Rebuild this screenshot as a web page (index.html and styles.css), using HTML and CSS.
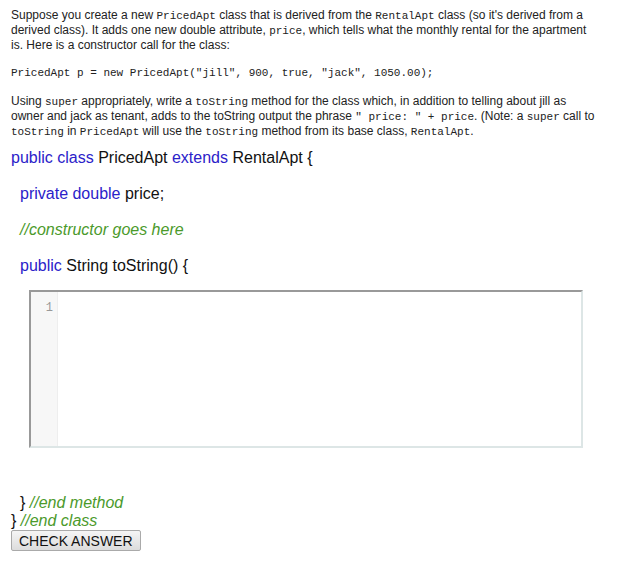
FILE: index.html
```html
<!doctype html>
<html lang="en">
<head>
    <meta charset="UTF-8"/>
    <title>PricedApt toString</title>
    <link rel="stylesheet" href="styles.css">
</head>
<body>
<div class="prompt">
    <p>Suppose you create a new <code>PricedApt</code> class that is derived from the <code>RentalApt</code> class (so it's derived from a derived class). It adds one new double attribute, <code>price</code>, which tells what the monthly rental for the apartment is. Here is a constructor call for the class:</p>
    <pre>PricedApt p = new PricedApt("jill", 900, true, "jack", 1050.00);</pre>
    <p>Using <code>super</code> appropriately, write a <code>toString</code> method for the class which, in addition to telling about jill as owner and jack as tenant, adds to the toString output the phrase <code>" price: " + price</code>. (Note: a <code>super</code> call to <code>toString</code> in <code>PricedApt</code> will use the <code>toString</code> method from its base class, <code>RentalApt</code>.</p>
</div>

<div class="code">
    <div class="line"><span class="kw">public class</span> PricedApt <span class="kw">extends</span> RentalApt {</div>
    <div class="line indent"><span class="kw">private double</span> price;</div>
    <div class="line indent"><span class="comment">//constructor goes here</span></div>
    <div class="line method-open indent"><span class="kw">public</span> String toString() {</div>

    <div class="editor">
        <div class="gutter">1</div>
        <div class="edit-area"></div>
    </div>

    <div class="end indent">} <span class="comment">//end method</span></div>
    <div class="end">} <span class="comment">//end class</span></div>
</div>

<button class="check-btn">CHECK ANSWER</button>
</body>
</html>
```

FILE: styles.css
```css
body {
    font-family: "Liberation Sans", Arial, sans-serif;
    color: #222;
    margin: 0;
    padding: 8px 11px;
}

.prompt {
    font-size: 12px;
    line-height: 14px;
    width: 584px;
}

.prompt p {
    margin: 0;
}

.prompt code,
.prompt pre {
    font-family: "Liberation Mono", monospace;
    font-size: 11px;
}

.prompt pre {
    margin: 14px 0;
    line-height: 14px;
}

.code {
    font-size: 16px;
    color: #111;
    margin-top: 10px;
}

.line {
    line-height: 18px;
    margin-bottom: 18px;
}

.line.method-open {
    margin-bottom: 15px;
}

.indent {
    padding-left: 9px;
}

.kw {
    color: #2b22c9;
}

.comment {
    color: #4b9a2b;
    font-style: italic;
}

.editor {
    display: flex;
    height: 154px;
    margin: 0 37px 46px 18px;
    border-top: 2px solid #999;
    border-left: 2px solid #999;
    border-right: 2px solid #dde6e6;
    border-bottom: 2px solid #dde6e6;
    background: #fff;
}

.gutter {
    width: 27px;
    background: #f7f7f7;
    border-right: 1px solid #eee;
    color: #999;
    font-family: "Liberation Mono", monospace;
    font-size: 12px;
    text-align: right;
    padding: 9px 4px 0 0;
    box-sizing: border-box;
}

.edit-area {
    flex: 1;
}

.end {
    line-height: 18px;
}

.check-btn {
    font-family: "Liberation Sans", Arial, sans-serif;
    font-size: 14px;
    color: #111;
    background: linear-gradient(#f5f5f5, #dcdcdc);
    border: 1px solid #aaa;
    border-radius: 2px;
    padding: 1px 7px;
    height: 21px;
    margin-top: 0;
}
```
